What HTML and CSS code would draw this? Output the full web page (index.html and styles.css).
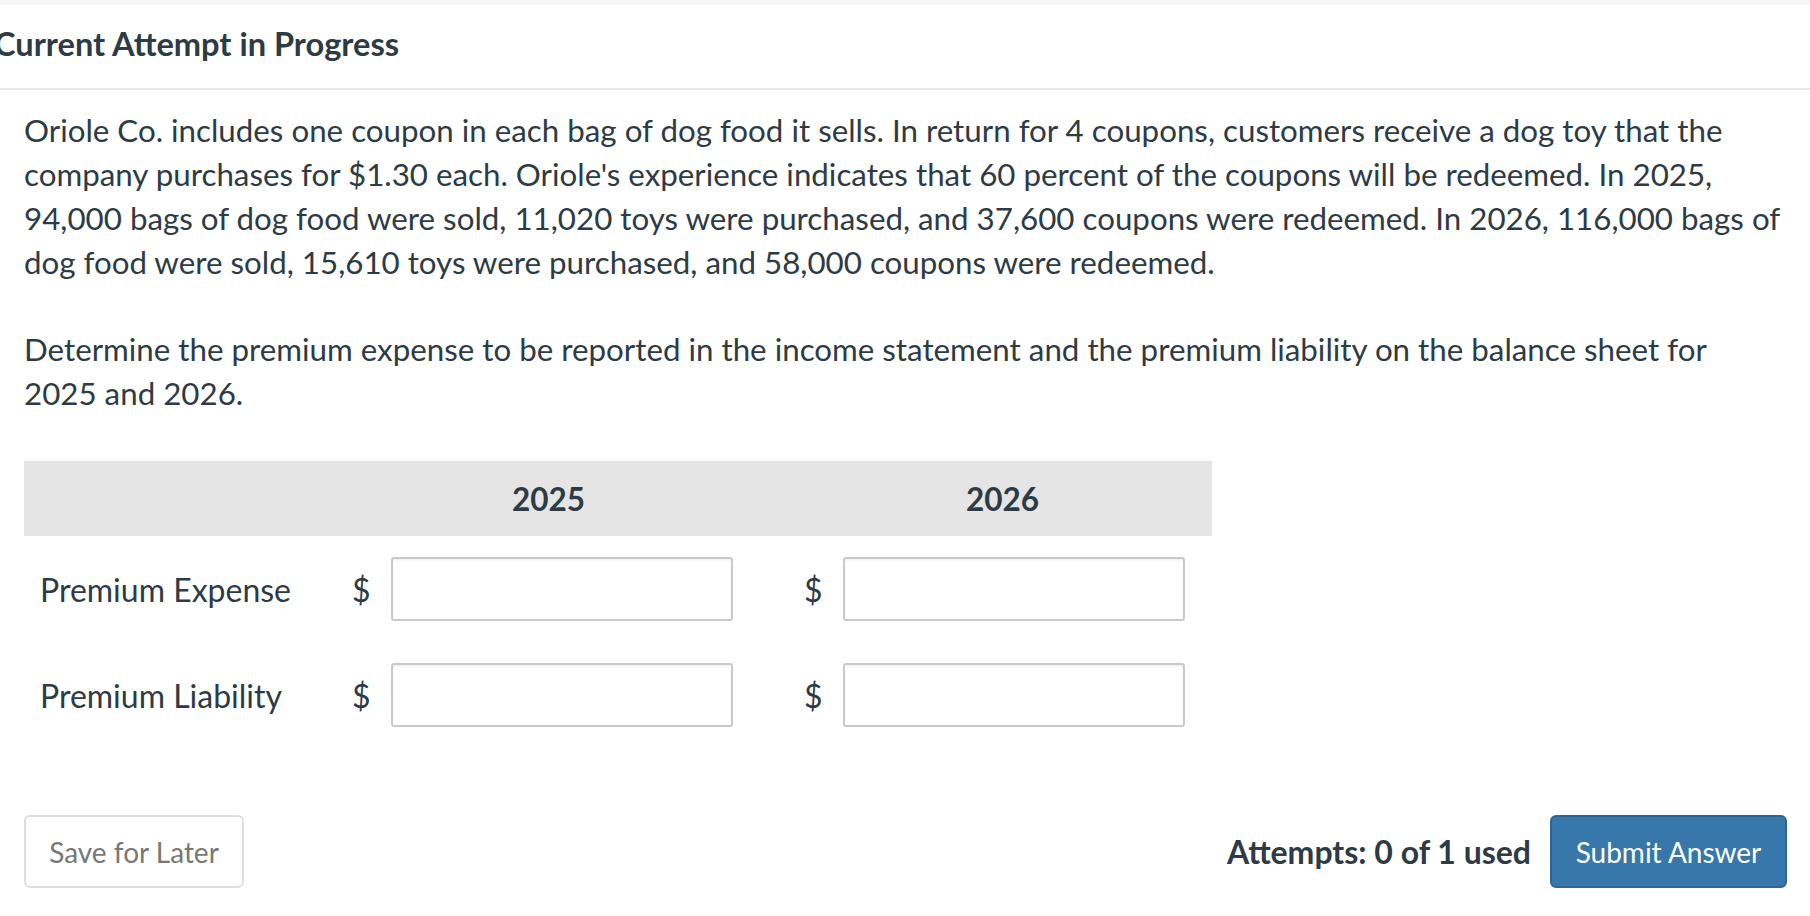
FILE: index.html
```html
<!DOCTYPE html>
<html lang="en">
<head>
<meta charset="utf-8">
<title>Current Attempt in Progress</title>
<link rel="stylesheet" href="styles.css">
</head>
<body>
<div class="page">
  <header class="attempt-header">
    <h1 class="attempt-title">Current Attempt in Progress</h1>
  </header>
  <main class="question">
    <p class="q-text">Oriole Co. includes one coupon in each bag of dog food it sells. In return for 4 coupons, customers receive a dog toy that the company purchases for $1.30 each. Oriole's experience indicates that 60 percent of the coupons will be redeemed. In 2025, 94,000 bags of dog food were sold, 11,020 toys were purchased, and 37,600 coupons were redeemed. In 2026, 116,000 bags of dog food were sold, 15,610 toys were purchased, and 58,000 coupons were redeemed.</p>
    <p class="q-text q-prompt">Determine the premium expense to be reported in the income statement and the premium liability on the balance sheet for 2025 and 2026.</p>

    <div class="answer-table">
      <div class="t-head">
        <div class="th th-label"></div>
        <div class="th th-2025">2025</div>
        <div class="th th-2026">2026</div>
      </div>
      <div class="t-row">
        <div class="td td-label">Premium Expense</div>
        <div class="td td-a"><span class="cur">$</span><input class="amt" type="text"></div>
        <div class="td td-b"><span class="cur">$</span><input class="amt" type="text"></div>
      </div>
      <div class="t-row">
        <div class="td td-label">Premium Liability</div>
        <div class="td td-a"><span class="cur">$</span><input class="amt" type="text"></div>
        <div class="td td-b"><span class="cur">$</span><input class="amt" type="text"></div>
      </div>
    </div>

    <div class="actions">
      <button class="btn btn-save" type="button">Save for Later</button>
      <div class="submit-group">
        <span class="attempts">Attempts: 0 of 1 used</span>
        <button class="btn btn-submit" type="button">Submit Answer</button>
      </div>
    </div>
  </main>
</div>
</body>
</html>
```

FILE: styles.css
```css
html, body {
  margin: 0;
  padding: 0;
  background: #ffffff;
}
body {
  font-family: Lato, "Open Sans", "Liberation Sans", sans-serif;
  color: #2d3b45;
  overflow: hidden;
}
.page {
  width: 1810px;
  min-height: 916px;
  border-top: 5px solid #f7f7f7;
  box-sizing: border-box;
}
.attempt-header {
  height: 85px;
  border-bottom: 2px solid #e8e8e8;
  display: flex;
  align-items: center;
  padding-bottom: 4px;
  box-sizing: border-box;
}
.attempt-title {
  margin: 0 0 0 -6px;
  font-size: 32.6px;
  font-weight: 700;
  line-height: 1;
  color: #2d3b45;
}
.question {
  padding: 0 23px 0 24px;
}
.q-text {
  margin: 0;
  padding-top: 18px;
  font-size: 31.3px;
  line-height: 44px;
  color: #2d3b45;
}
.q-text + .q-text {
  padding-top: 43px;
}
.q-prompt {
  max-width: 1730px;
}
.answer-table {
  width: 1188px;
  margin-top: 46px;
}
.t-head {
  display: grid;
  grid-template-columns: 298px 453px 437px;
  background: #e5e5e5;
  height: 75px;
  align-items: center;
}
.th {
  font-size: 31.5px;
  font-weight: 700;
  text-align: center;
}
.th-2026 {
  padding-left: 18px;
}
.t-row {
  display: grid;
  grid-template-columns: 298px 453px 437px;
  align-items: center;
  padding: 21px 0;
}
.td-label {
  font-size: 32px;
  padding-left: 16px;
  white-space: nowrap;
}
.td-a, .td-b {
  display: flex;
  align-items: center;
  padding-left: 30px;
}
.td-b {
  padding-left: 29px;
}
.cur {
  font-size: 32px;
  width: 39px;
}
.amt {
  width: 342px;
  height: 64px;
  box-sizing: border-box;
  border: 2px solid #c9c9c9;
  border-radius: 3px;
  box-shadow: inset 0 2px 2px rgba(0,0,0,0.05);
  background: #fff;
  margin: 0;
  padding: 0 10px;
  font: inherit;
  font-size: 28px;
}
.actions {
  display: flex;
  justify-content: space-between;
  align-items: center;
  margin-top: 67px;
}
.btn {
  font-family: Lato, "Open Sans", "Liberation Sans", sans-serif;
  font-size: 28px;
  height: 73px;
  border-radius: 6px;
  box-sizing: border-box;
  cursor: pointer;
  padding: 0;
}
.btn-save {
  width: 220px;
  background: #fff;
  color: #777;
  border: 2px solid #dedede;
}
.submit-group {
  display: flex;
  align-items: center;
  gap: 19px;
}
.attempts {
  font-size: 32px;
  font-weight: 700;
  color: #2d3b45;
}
.btn-submit {
  width: 237px;
  background: #3777a9;
  color: #fff;
  border: 2px solid #2d6593;
}
```
